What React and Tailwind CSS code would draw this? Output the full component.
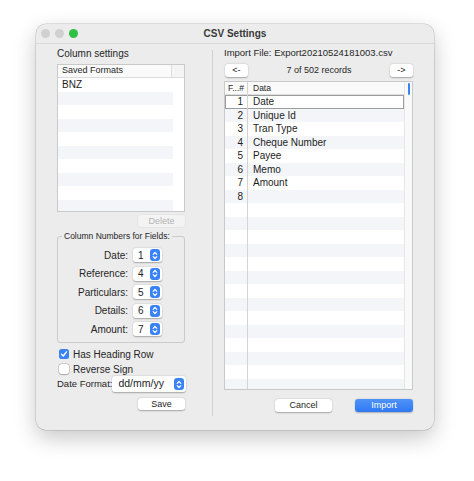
import React from 'react';

const rows = [
  { n: 1, label: 'Date' },
  { n: 2, label: 'Unique Id' },
  { n: 3, label: 'Tran Type' },
  { n: 4, label: 'Cheque Number' },
  { n: 5, label: 'Payee' },
  { n: 6, label: 'Memo' },
  { n: 7, label: 'Amount' },
  { n: 8, label: '' },
];

const fields = [
  ['Date:', 1],
  ['Reference:', 4],
  ['Particulars:', 5],
  ['Details:', 6],
  ['Amount:', 7],
];

// little blue up/down chevron button used by the popups
const Stepper = () => (
  <span className="flex h-[12px] w-[10px] items-center justify-center rounded-[3px] bg-[#3a83f6]">
    <svg width="6" height="9" viewBox="0 0 6 9" fill="none" stroke="white" strokeWidth="1.2" strokeLinecap="round" strokeLinejoin="round">
      <path d="M1.2 3.3 L3 1.5 L4.8 3.3" />
      <path d="M1.2 5.7 L3 7.5 L4.8 5.7" />
    </svg>
  </span>
);

const Button = ({ children, className = '', disabled }) => (
  <div
    className={`flex h-[12px] items-center justify-center rounded-[3px] text-[9px] leading-none ${
      disabled
        ? 'bg-[#f3f3f3] text-[#b4b4b4] shadow-[0_0_0_0.5px_rgba(0,0,0,0.06)]'
        : 'bg-white text-[#262626] shadow-[0_0.5px_1.5px_rgba(0,0,0,0.3)]'
    } ${className}`}
  >
    {children}
  </div>
);

const Checkbox = ({ checked, label }) => (
  <div className="flex h-[14px] items-center">
    {checked ? (
      <span className="ml-[2px] flex h-[10px] w-[10px] items-center justify-center rounded-[2.5px] bg-[#3a83f6]">
        <svg width="8" height="8" viewBox="0 0 8 8" fill="none" stroke="white" strokeWidth="1.4" strokeLinecap="round" strokeLinejoin="round">
          <path d="M1.5 4.2 L3.3 6 L6.5 1.8" />
        </svg>
      </span>
    ) : (
      <span className="ml-[2px] h-[10px] w-[10px] rounded-[2.5px] bg-white shadow-[0_0_0_0.5px_rgba(0,0,0,0.25),0_0.5px_1px_rgba(0,0,0,0.2)]" />
    )}
    <span className="ml-[4px] whitespace-nowrap text-[10px] text-[#262626]">{label}</span>
  </div>
);

function SavedFormats() {
  const body = Array.from({ length: 10 });
  return (
    <div className="mt-[5px] h-[148px] overflow-hidden border border-[#c9c9c9] bg-white">
      <div className="flex h-[13px] border-b border-[#dcdcdc] bg-[#fafafa] text-[9px] text-[#262626]">
        <div className="flex w-[114px] items-center border-r border-[#dcdcdc] pl-[4px]">Saved Formats</div>
        <div className="flex-1 bg-[#f4f4f4]" />
      </div>
      {body.map((_, i) => (
        <div
          key={i}
          className={`flex h-[13.5px] w-[115px] items-center pl-[4px] text-[10px] text-[#1d1d1d] ${i % 2 ? 'bg-[#f3f5f8]' : 'bg-white'}`}
        >
          {i === 0 ? 'BNZ' : ''}
        </div>
      ))}
    </div>
  );
}

function ImportTable() {
  const body = Array.from({ length: 22 });
  return (
    <div className="mt-[4px] flex h-[309px] overflow-hidden border border-[#c9c9c9] bg-white">
      <div className="flex w-[179px] flex-col">
        <div className="flex h-[13px] shrink-0 border-b border-[#dcdcdc] bg-[#fafafa] text-[8.5px] text-[#262626]">
          <div className="flex w-[23px] items-center border-r border-[#d4d4d4] pl-[3px]">F...#</div>
          <div className="flex items-center pl-[5px]">Data</div>
        </div>
        <div>
          {body.map((_, i) => {
            const r = rows[i];
            return (
              <div
                key={i}
                className={`flex h-[13.5px] text-[10px] text-[#1d1d1d] ${i % 2 ? 'bg-[#f3f5f8]' : 'bg-white'} ${
                  i === 0 ? 'shadow-[inset_0_0_0_1px_#9c9c9c]' : ''
                }`}
              >
                <div className="flex w-[23px] items-center justify-end border-r border-[#d4d4d4] pr-[4px]">{r ? r.n : ''}</div>
                <div className="flex items-center pl-[5px]">{r ? r.label : ''}</div>
              </div>
            );
          })}
        </div>
      </div>
      <div className="flex flex-1 justify-center border-l border-[#e6e6e6] bg-[#f9f9f9] pt-[1px]">
        <span className="h-[12px] w-[2px] rounded-full bg-[#3a83f6]" />
      </div>
    </div>
  );
}

export default function App() {
  return (
    <div className="h-[481px] w-[474px] bg-white pl-[36px] pt-[24px] font-['Liberation_Sans',Arial,sans-serif]">
      <div className="h-[406px] w-[398px] overflow-hidden rounded-[10px] bg-[#ececec] shadow-[0_0_0_0.5px_rgba(0,0,0,0.2),0_8px_22px_rgba(0,0,0,0.22)]">
        {/* title bar */}
        <div className="relative flex h-[20px] items-center justify-center border-b border-[#d9d9d9]">
          <div className="absolute left-[5px] top-[5px] flex gap-[5px]">
            <span className="h-[9px] w-[9px] rounded-full bg-[#d0d0d0]" />
            <span className="h-[9px] w-[9px] rounded-full bg-[#d0d0d0]" />
            <span className="h-[9px] w-[9px] rounded-full bg-[#2fbf45]" />
          </div>
          <span className="text-[10px] font-bold text-[#3a3a3a]">CSV Settings</span>
        </div>

        <div className="flex pl-[21px] pt-[3px]">
          {/* left column */}
          <div className="flex w-[128px] flex-col">
            <div className="flex h-[12px] items-center text-[10px] text-[#262626]">Column settings</div>
            <SavedFormats />
            <div className="mt-[3px] flex justify-end">
              <Button disabled className="w-[47px]">Delete</Button>
            </div>

            <div className="relative mt-[9px] h-[107px] rounded-[3px] border border-[#cbcbcb] pt-[9px]">
              <span className="absolute -top-[6px] left-[4px] bg-[#ececec] px-[2px] text-[8.5px] leading-[11px] text-[#262626]">
                Column Numbers for Fields:
              </span>
              {fields.map(([label, v]) => (
                <div key={label} className="flex h-[18.5px] items-center">
                  <span className="w-[70px] text-right text-[10px] text-[#262626]">{label}</span>
                  <div className="ml-[5px] flex h-[14px] w-[29px] items-center justify-between rounded-[3px] bg-white pl-[5px] pr-[2px] text-[10px] text-[#1d1d1d] shadow-[0_0.5px_1.5px_rgba(0,0,0,0.3)]">
                    {v}
                    <Stepper />
                  </div>
                </div>
              ))}
            </div>

            <div className="mt-[4px] flex flex-col gap-[1px]">
              <Checkbox checked label="Has Heading Row" />
              <Checkbox label="Reverse Sign" />
            </div>

            <div className="flex h-[16px] items-center">
              <span className="whitespace-nowrap text-[9.5px] text-[#262626]">Date Format:</span>
              <div className="ml-auto flex h-[16px] w-[74px] shrink-0 items-center justify-between rounded-[3px] bg-white pl-[6px] pr-[2px] text-[10.5px] text-[#1d1d1d] shadow-[0_0.5px_1.5px_rgba(0,0,0,0.3)]">
                dd/mm/yy
                <Stepper />
              </div>
            </div>

            <div className="mt-[6px] flex justify-end">
              <Button className="w-[47px]">Save</Button>
            </div>
          </div>

          {/* divider */}
          <div className="ml-[27px] mt-[3px] h-[366px] w-px bg-[#d2d2d2]" />

          {/* right column */}
          <div className="ml-[11px] flex w-[189px] flex-col">
            <div className="flex h-[12px] items-center whitespace-nowrap text-[9.5px] text-[#262626]">Import File: Export20210524181003.csv</div>
            <div className="mt-[5px] flex h-[13px] items-center justify-between">
              <Button className="ml-[1px] h-[13px] w-[23px]">&lt;-</Button>
              <span className="text-[9px] text-[#262626]">7 of 502 records</span>
              <Button className="h-[13px] w-[23px]">-&gt;</Button>
            </div>
            <ImportTable />
            <div className="mt-[9px] flex h-[13px] items-center justify-end">
              <Button className="h-[13px] w-[57px]">Cancel</Button>
              <div className="ml-[23px] flex h-[13px] w-[58px] items-center justify-center rounded-[3px] bg-gradient-to-b from-[#4f93f8] to-[#2f78f3] text-[9px] leading-none text-white shadow-[0_0.5px_1.5px_rgba(0,0,0,0.25)]">
                Import
              </div>
            </div>
          </div>
        </div>
      </div>
    </div>
  );
}
